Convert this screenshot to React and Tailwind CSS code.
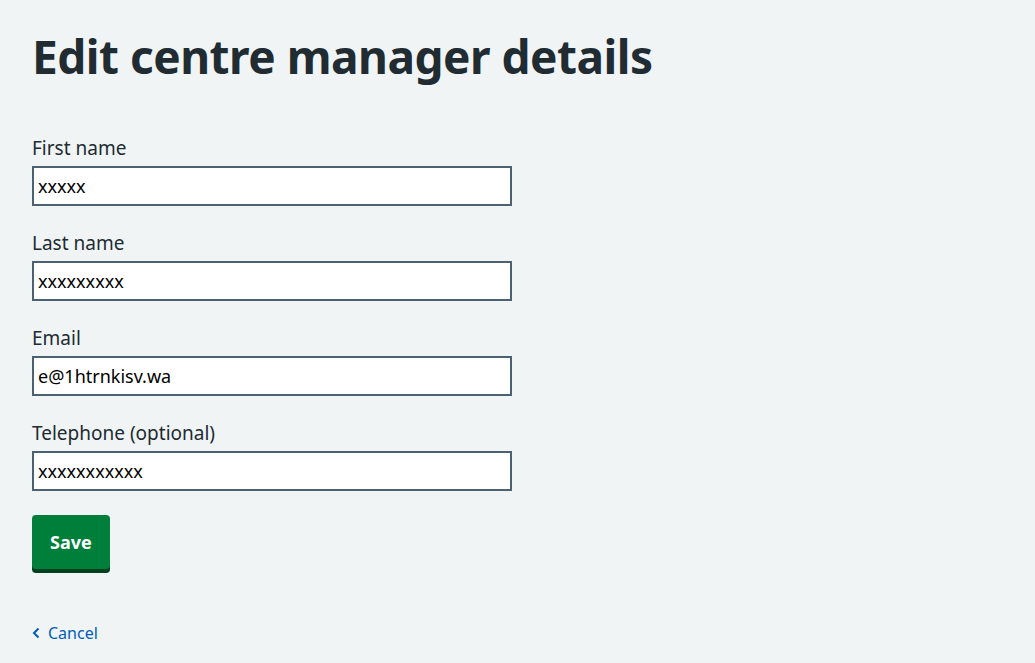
export default function App() {
  const fields = [
    { label: "First name", value: "xxxxx" },
    { label: "Last name", value: "xxxxxxxxx" },
    { label: "Email", value: "e@1htrnkisv.wa" },
    { label: "Telephone (optional)", value: "xxxxxxxxxxx" },
  ];

  return (
    <div
      className="min-h-screen bg-[#f0f4f5] px-8 pt-[30px] text-[#212b32]"
      style={{ fontFamily: '"Noto Sans", "Open Sans", sans-serif' }}
    >
      <h1 className="text-[46px] font-bold leading-[53px] tracking-[-0.5px]">
        Edit centre manager details
      </h1>

      <form className="mt-[51px]" onSubmit={(e) => e.preventDefault()}>
        {fields.map((f) => (
          <div key={f.label} className="mb-[23px]">
            <label className="block text-[19px] leading-[28px] mb-[4px]">
              {f.label}
            </label>
            <input
              defaultValue={f.value}
              className="block w-[480px] h-[40px] border-2 border-[#4c6272] bg-white px-[4px] text-[18px] text-black outline-none"
              style={{ fontFamily: '"Noto Sans", "Open Sans", sans-serif' }}
            />
          </div>
        ))}

        <button
          type="submit"
          className="mt-[1px] h-[54px] rounded-[4px] bg-[#007f3b] px-[18px] text-[18px] font-bold text-white shadow-[0_4px_0_#00401e]"
        >
          Save
        </button>
      </form>

      <a
        href="#"
        className="mt-[52px] flex items-center gap-[8px] text-[16px] leading-[24px] text-[#005eb8]"
      >
        <svg width="8" height="12" viewBox="0 0 8 12" fill="none">
          <path d="M6.5 1.5 2 6l4.5 4.5" stroke="#005eb8" strokeWidth="2" />
        </svg>
        Cancel
      </a>
    </div>
  );
}
